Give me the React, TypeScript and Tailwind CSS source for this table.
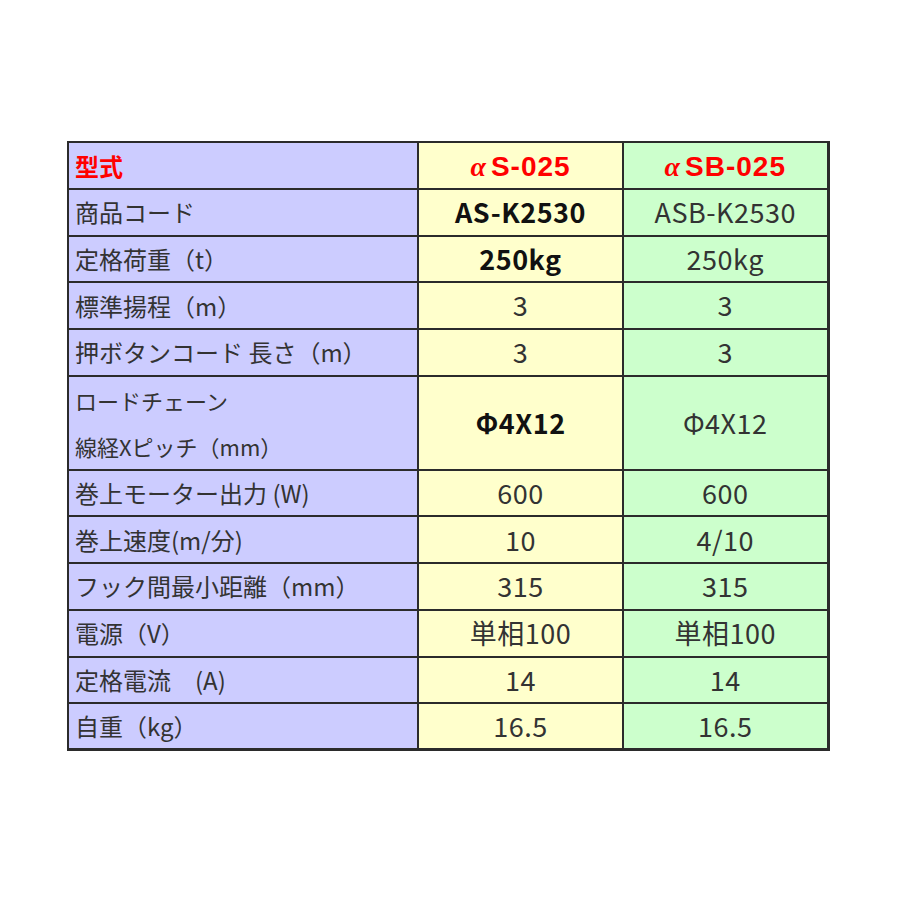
const rows: { label: React.ReactNode; a: string; b: string; boldA?: boolean; tall?: boolean }[] = [
  { label: "商品コード", a: "AS-K2530", b: "ASB-K2530", boldA: true },
  { label: "定格荷重（t）", a: "250kg", b: "250kg", boldA: true },
  { label: "標準揚程（m）", a: "3", b: "3" },
  { label: "押ボタンコード 長さ（m）", a: "3", b: "3" },
  {
    label: (
      <div className="flex flex-col text-[22px]">
        <span className="h-[46px] leading-[46px]">ロードチェーン</span>
        <span className="h-[46px] leading-[46px]">線経Xピッチ（mm）</span>
      </div>
    ),
    a: "Φ4X12",
    b: "Φ4X12",
    boldA: true,
    tall: true,
  },
  { label: "巻上モーター出力 (W)", a: "600", b: "600" },
  { label: "巻上速度(m/分)", a: "10", b: "4/10" },
  { label: "フック間最小距離（mm）", a: "315", b: "315" },
  { label: "電源（V）", a: "単相100", b: "単相100" },
  { label: "定格電流　(A)", a: "14", b: "14" },
  { label: "自重（kg）", a: "16.5", b: "16.5" },
];

export default function App() {
  return (
    <div className="w-[900px] h-[900px] bg-white pt-[141px] pl-[67px]">
      <table
        className="border-collapse border-2 border-r-[3px] border-b-[3px] border-[#2b2b2b] text-[#333]"
        style={{ fontFamily: '"Noto Sans CJK JP", "Noto Sans", sans-serif' }}
      >
        <tbody>
          <tr className="h-[46.7px]">
            <td className="w-[350px] bg-[#ccccff] border-2 border-[#2b2b2b] pl-[6px] text-[#ff0000] font-bold text-[24px]">
              型式
            </td>
            <td className="w-[205px] bg-[#ffffcc] border-2 border-[#2b2b2b] text-center text-[#ff0000] font-bold text-[28px] tracking-[1px]">
              <span className="italic mr-[4px]" style={{ fontFamily: '"Liberation Serif", serif' }}>α</span>
              <span style={{ fontFamily: '"Liberation Sans", Arial, sans-serif' }}>S-025</span>
            </td>
            <td className="w-[205px] bg-[#ccffcc] border-2 border-[#2b2b2b] text-center text-[#ff0000] font-bold text-[28px] tracking-[1px]">
              <span className="italic mr-[4px]" style={{ fontFamily: '"Liberation Serif", serif' }}>α</span>
              <span style={{ fontFamily: '"Liberation Sans", Arial, sans-serif' }}>SB-025</span>
            </td>
          </tr>
          {rows.map((r, i) => (
            <tr key={i} className={r.tall ? "h-[93px]" : "h-[46.7px]"}>
              <td className="bg-[#ccccff] border-2 border-[#2b2b2b] pl-[6px] whitespace-nowrap text-[24px]">
                {r.label}
              </td>
              <td
                className={
                  "bg-[#ffffcc] border-2 border-[#2b2b2b] text-center text-[27px] tracking-[0.5px] " +
                  (r.boldA ? "font-semibold text-[#111]" : "")
                }
              >
                {r.a}
              </td>
              <td className="bg-[#ccffcc] border-2 border-[#2b2b2b] text-center text-[27px] tracking-[0.5px]">{r.b}</td>
            </tr>
          ))}
        </tbody>
      </table>
    </div>
  );
}
